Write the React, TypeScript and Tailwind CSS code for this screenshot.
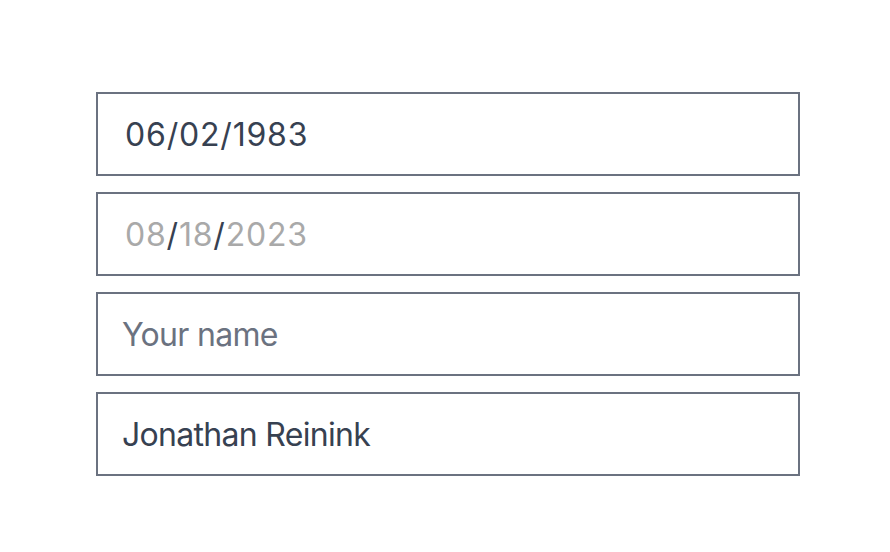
const inputClass =
  'block w-full border-2 border-[#6b7280] bg-white px-[24px] pt-[17px] pb-[15px] text-[32px] leading-[48px] tracking-[-0.7px] text-[#374151] outline-none placeholder:text-[#6b7280]';

function DateField({ month, day, year, empty }: { month: string; day: string; year: string; empty?: boolean }) {
  const part = empty ? 'text-[#a9a9a9]' : 'text-[#374151]';
  return (
    <div className="flex w-full border-2 border-[#6b7280] bg-white pt-[17px] pb-[15px] pl-[27px] pr-[24px] text-[32px] leading-[48px] tracking-[0.8px] text-[#374151]">
      <span className={part}>{month}</span>
      <span>/</span>
      <span className={part}>{day}</span>
      <span>/</span>
      <span className={part}>{year}</span>
    </div>
  );
}

export default function App() {
  return (
    <div className="min-h-screen bg-white font-['Inter','Noto_Sans',sans-serif]">
      <div className="ml-[96px] flex w-[704px] flex-col gap-[16px] pt-[92px]">
        <DateField month="06" day="02" year="1983" />
        <DateField month="08" day="18" year="2023" empty />
        <input type="text" className={inputClass} placeholder="Your name" />
        <input type="text" className={inputClass} defaultValue="Jonathan Reinink" />
      </div>
    </div>
  );
}
